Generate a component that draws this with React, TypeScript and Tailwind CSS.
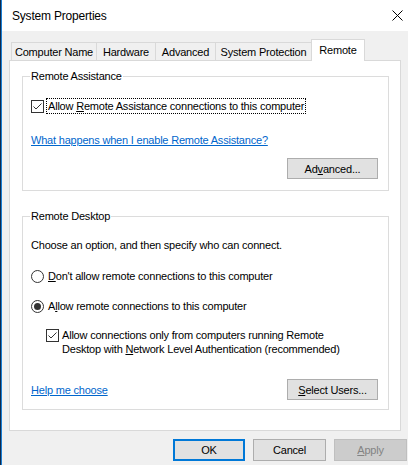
import clsx from "clsx";
import { twMerge } from "tailwind-merge";

const tabs = [
  { label: "Computer Name", width: "w-[86px]" },
  { label: "Hardware", width: "w-[59px]" },
  { label: "Advanced", width: "w-[60px]" },
  { label: "System Protection", width: "w-[96px]" },
];

function CheckBox() {
  return (
    <span className="flex h-[13px] w-[13px] shrink-0 items-center justify-center border border-[#333333] bg-white">
      <svg width="11" height="11" viewBox="0 0 11 11">
        <path d="M1.5 5.5 L4 8 L9.5 2.5" fill="none" stroke="#333333" strokeWidth="1" />
      </svg>
    </span>
  );
}

function Radio({ checked }: { checked?: boolean }) {
  return (
    <span className="flex h-[13px] w-[13px] shrink-0 items-center justify-center rounded-full border border-[#333333] bg-white">
      {checked && <span className="h-[7px] w-[7px] rounded-full bg-[#333333]" />}
    </span>
  );
}

function Button({
  children,
  className,
}: {
  children: React.ReactNode;
  className?: string;
}) {
  return (
    <button
      className={twMerge(
        "flex items-center justify-center border border-[#adadad] bg-[#e1e1e1] text-black",
        className,
      )}
    >
      {children}
    </button>
  );
}

function GroupBox({
  title,
  className,
  children,
}: {
  title: string;
  className?: string;
  children: React.ReactNode;
}) {
  return (
    <div className={clsx("relative w-[367px] border border-[#dcdcdc]", className)}>
      <span className="absolute left-[7px] top-[-8px] bg-white px-[1px] leading-[14px]">
        {title}
      </span>
      {children}
    </div>
  );
}

export default function App() {
  return (
    <div className="flex h-[465px] w-[408px] overflow-hidden bg-[#f0f0f0] font-['Liberation_Sans',Arial,sans-serif] text-[11px] leading-[14px] tracking-[-0.2px] text-black">
      <div className="w-px bg-[#10294a]" />
      <div className="w-px bg-[#1a7fd4]" />
      <div className="flex flex-1 flex-col">
        {/* title bar */}
        <div className="flex h-[31px] shrink-0 items-center justify-between bg-white pl-[10px] pr-[5px]">
          <span className="text-[12px]">System Properties</span>
          <svg width="11" height="11" viewBox="0 0 11 11">
            <path d="M0.5 0.5 L10.5 10.5 M10.5 0.5 L0.5 10.5" stroke="#000" strokeWidth="1" />
          </svg>
        </div>

        <div className="flex flex-1 flex-col pl-[7px]">
          {/* tab strip */}
          <div className="mt-[7px] flex h-[22px] items-end pl-[2px]">
            {tabs.map((t, i) => (
              <div
                key={t.label}
                className={clsx(
                  "flex h-[18px] items-center justify-center border-t border-r border-[#d9d9d9] bg-[#f0f0f0]",
                  i === 0 && "border-l",
                  t.width,
                )}
              >
                {t.label}
              </div>
            ))}
            <div className="relative z-10 -mb-px -ml-px flex h-[22px] w-[54px] items-start justify-center border-x border-t border-[#d9d9d9] bg-white pt-[3px]">
              Remote
            </div>
          </div>

          {/* tab page */}
          <div className="flex h-[371px] w-[392px] flex-col border border-[#d9d9d9] bg-white pl-[12px]">
            <GroupBox title="Remote Assistance" className="mt-[15px]">
              <div className="flex items-center gap-[2px] pl-[8px] pt-[21px]">
                <CheckBox />
                <span className="border border-dotted border-black px-[1px] leading-[14px]">
                  Allow <span className="underline">R</span>emote Assistance connections to
                  this computer
                </span>
              </div>
              <div className="pl-[8px] pt-[19px]">
                <span className="text-[#0066cc] underline">
                  What happens when I enable Remote Assistance?
                </span>
              </div>
              <div className="flex justify-end pb-[11px] pr-[10px] pt-[11px]">
                <Button className="h-[21px] w-[91px]">
                  Ad<span className="underline">v</span>anced...
                </Button>
              </div>
            </GroupBox>

            <GroupBox title="Remote Desktop" className="mt-[25px]">
              <div className="pl-[8px] pt-[20px] leading-[16px]">
                Choose an option, and then specify who can connect.
              </div>
              <div className="mt-[15px] flex h-[16px] items-center gap-[4px] pl-[8px]">
                <Radio />
                <span>
                  <span className="underline">D</span>on't allow remote connections to this
                  computer
                </span>
              </div>
              <div className="mt-[14px] flex h-[16px] items-center gap-[4px] pl-[8px]">
                <Radio checked />
                <span>
                  A<span className="underline">l</span>low remote connections to this computer
                </span>
              </div>
              <div className="mt-[14px] flex items-start gap-[3px] pl-[23px]">
                <div className="pt-px">
                  <CheckBox />
                </div>
                <span>
                  Allow connections only from computers running Remote
                  <br />
                  Desktop with <span className="underline">N</span>etwork Level Authentication
                  (recommended)
                </span>
              </div>
              <div className="mt-[23px] flex items-center justify-between pb-[9px] pl-[8px] pr-[10px]">
                <span className="text-[#0066cc] underline">Help me choose</span>
                <Button className="h-[21px] w-[91px]">
                  <span className="underline">S</span>elect Users...
                </Button>
              </div>
            </GroupBox>
          </div>

          {/* dialog buttons */}
          <div className="mt-[8px] flex justify-end gap-[8px] pr-[1px]">
            <Button className="h-[22px] w-[72px] border-2 border-[#0078d7]">OK</Button>
            <Button className="h-[22px] w-[73px]">Cancel</Button>
            <Button className="h-[22px] w-[73px] border-[#bfbfbf] bg-[#cccccc] text-[#838383]">
              <span className="underline">A</span>pply
            </Button>
          </div>
        </div>
      </div>
    </div>
  );
}
